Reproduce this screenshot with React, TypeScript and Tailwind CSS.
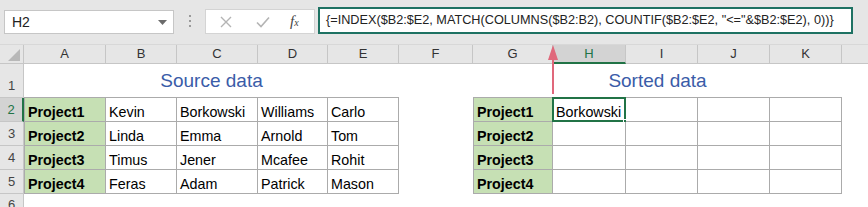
import React from 'react';

const colWidths = [82, 71, 81, 70, 71, 74, 80, 73, 72, 72, 72];
const letters = ['A', 'B', 'C', 'D', 'E', 'F', 'G', 'H', 'I', 'J', 'K'];

const source = [
  ['Project1', 'Kevin', 'Borkowski', 'Williams', 'Carlo'],
  ['Project2', 'Linda', 'Emma', 'Arnold', 'Tom'],
  ['Project3', 'Timus', 'Jener', 'Mcafee', 'Rohit'],
  ['Project4', 'Feras', 'Adam', 'Patrick', 'Mason'],
];

const sorted = [
  ['Project1', 'Borkowski', '', '', ''],
  ['Project2', '', '', '', ''],
  ['Project3', '', '', '', ''],
  ['Project4', '', '', '', ''],
];

function Cell({ text, first, selected }: { text: string; first: boolean; selected?: boolean }) {
  return (
    <div
      className={`relative h-[24px] border-r border-b border-[#ababab] flex items-end pb-[1px] px-[3px] leading-[16px] text-[14.3px] text-black whitespace-nowrap ${
        first ? 'bg-[#c6e0b4] font-bold' : 'bg-white'
      }`}
    >
      {text}
      {selected && (
        <>
          <div className="absolute -left-[1px] -top-[1px] -right-[1px] -bottom-[1px] border-2 border-[#217346]" />
          <div className="absolute -right-[4px] -bottom-[4px] w-[6px] h-[6px] bg-[#217346] border border-white" />
        </>
      )}
    </div>
  );
}

export default function App() {
  return (
    <div className="relative w-[868px] h-[207px] overflow-hidden bg-white font-['Liberation_Sans',Arial,sans-serif]">
      {/* Formula bar */}
      <div className="h-[44px] bg-[#e6e6e6] flex items-start">
        <div className="mt-[10px] ml-[4px] w-[170px] h-[24px] bg-white border border-[#c6c6c6] flex items-center justify-between pl-[7px] pr-[6px] text-[14px] text-[#222]">
          <span>H2</span>
          <svg width="9" height="5" viewBox="0 0 9 5">
            <path d="M0 0 L9 0 L4.5 5 Z" fill="#6b6b6b" />
          </svg>
        </div>
        <div className="ml-[13px] mt-[15px] w-[6px] flex flex-col items-center gap-[3px]">
          <div className="w-[2px] h-[2px] bg-[#9a9a9a]" />
          <div className="w-[2px] h-[2px] bg-[#9a9a9a]" />
          <div className="w-[2px] h-[2px] bg-[#9a9a9a]" />
        </div>
        <div className="ml-[12px] mt-[9px] w-[110px] h-[25px] bg-white border border-[#d4d4d4] flex items-center">
          <svg width="12" height="12" viewBox="0 0 12 12" className="ml-[14px]">
            <path d="M1 1 L11 11 M11 1 L1 11" stroke="#b4b4b4" strokeWidth="1.4" />
          </svg>
          <svg width="14" height="12" viewBox="0 0 14 12" className="ml-[24px]">
            <path d="M1 6.5 L5 10.5 L13 1.5" stroke="#b4b4b4" strokeWidth="1.6" fill="none" />
          </svg>
          <span className="ml-[20px] font-['Liberation_Serif',serif] italic text-[15px] text-[#444]">
            f<span className="text-[10px]">x</span>
          </span>
        </div>
        <div className="ml-[3px] mt-[7px] w-[535px] h-[27px] border-2 border-[#1e7263] bg-white pl-[6px] flex items-center text-[12.7px] text-[#222] whitespace-nowrap">
          {'{=INDEX($B2:$E2, MATCH(COLUMNS($B2:B2), COUNTIF($B2:$E2, "<="&$B2:$E2), 0))}'}
        </div>
      </div>

      {/* Column headers */}
      <div className="flex h-[20px] bg-[#e6e6e6] border-t border-[#d8d8d8]">
        <div className="relative w-[24px] h-full border-r border-b border-[#c6c6c6]">
          <svg width="12" height="12" viewBox="0 0 12 12" className="absolute right-[3px] bottom-[2px]">
            <path d="M12 0 L12 12 L0 12 Z" fill="#b8b8b8" />
          </svg>
        </div>
        {letters.map((l, i) => (
          <div
            key={l}
            style={{ width: colWidths[i] }}
            className={`h-full flex items-center justify-center text-[13px] border-r border-[#c6c6c6] ${
              l === 'H' ? 'bg-[#d3d3d3] text-[#217346] border-b-2 border-b-[#217346]' : 'text-[#333] border-b'
            }`}
          >
            {l}
          </div>
        ))}
        <div className="flex-1 h-full border-b border-[#c6c6c6]" />
      </div>

      {/* Sheet body */}
      <div className="flex">
        <div className="w-[24px] flex flex-col text-[13px] text-[#444]">
          <div className="h-[34px] bg-[#e6e6e6] border-r border-b border-[#c6c6c6] flex items-end justify-center pb-[2px]">1</div>
          <div className="h-[24px] bg-[#d3d3d3] border-r-2 border-r-[#217346] border-b border-b-[#c6c6c6] flex items-end justify-center pb-[2px] text-[#217346]">2</div>
          {[3, 4, 5].map((n) => (
            <div key={n} className="h-[24px] bg-[#e6e6e6] border-r border-b border-[#c6c6c6] flex items-end justify-center pb-[2px]">
              {n}
            </div>
          ))}
          <div className="h-[20px] bg-[#e6e6e6] border-r border-[#c6c6c6] flex items-end justify-center">6</div>
        </div>

        {/* Source data A-E */}
        <div className="w-[375px] flex flex-col">
          <div className="h-[33px] flex items-center justify-center pt-[2px] text-[19px] text-[#3a5ca8]">Source data</div>
          <div className="grid grid-cols-[81px_71px_81px_70px_71px] border-l border-t border-[#ababab]">
            {source.map((row, r) =>
              row.map((t, c) => <Cell key={`${r}-${c}`} text={t} first={c === 0} />)
            )}
          </div>
        </div>

        {/* F */}
        <div className="w-[74px]" />

        {/* Sorted data G-K */}
        <div className="w-[369px] flex flex-col">
          <div className="h-[33px] flex items-center justify-center pt-[2px] text-[19px] text-[#3a5ca8]">Sorted data</div>
          <div className="grid grid-cols-[79px_73px_72px_72px_72px] border-l border-t border-[#ababab]">
            {sorted.map((row, r) =>
              row.map((t, c) => (
                <Cell key={`${r}-${c}`} text={t} first={c === 0} selected={r === 0 && c === 1} />
              ))
            )}
          </div>
        </div>
        <div className="flex-1" />
      </div>

      {/* Annotation arrow */}
      <svg width="14" height="52" viewBox="0 0 14 52" className="absolute left-[546px] top-[44px]">
        <path d="M7 1 L12 16 L2 16 Z" fill="#e0687b" />
        <path d="M7 14 L7 50" stroke="#e0687b" strokeWidth="2" />
      </svg>
    </div>
  );
}
